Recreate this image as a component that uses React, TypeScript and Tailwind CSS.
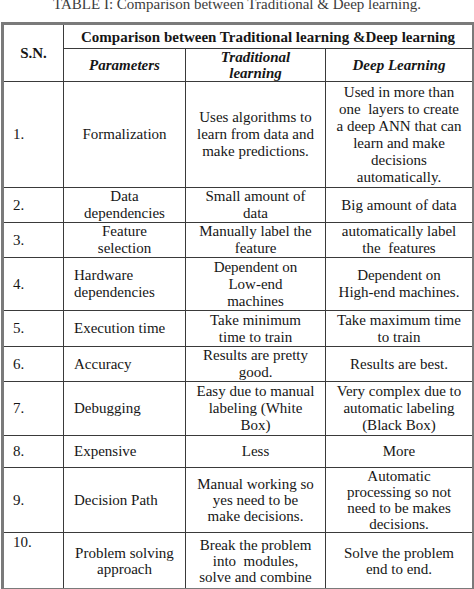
type Row = {
  sn: string;
  p: string[];
  pLeft?: boolean;
  t: string[];
  d: string[];
  h: number;
  snTop?: boolean;
  tight?: boolean;
};

const rows: Row[] = [
  {
    sn: "1.",
    p: ["Formalization"],
    t: ["Uses algorithms to", "learn from data and", "make predictions."],
    d: ["Used in more than", "one  layers to create", "a deep ANN that can", "learn and make", "decisions", "automatically."],
    h: 106,
  },
  { sn: "2.", p: ["Data", "dependencies"], t: ["Small amount of", "data"], d: ["Big amount of data"], h: 35 },
  { sn: "3.", p: ["Feature", "selection"], t: ["Manually label the", "feature"], d: ["automatically label", "the  features"], h: 34 },
  {
    sn: "4.",
    p: ["Hardware", "dependencies"],
    pLeft: true,
    t: ["Dependent on", "Low-end", "machines"],
    d: ["Dependent on", "High-end machines."],
    h: 53,
  },
  { sn: "5.", p: ["Execution time"], pLeft: true, t: ["Take minimum", "time to train"], d: ["Take maximum time", "to train"], h: 36 },
  { sn: "6.", p: ["Accuracy"], pLeft: true, t: ["Results are pretty", "good."], d: ["Results are best."], h: 34 },
  {
    sn: "7.",
    p: ["Debugging"],
    pLeft: true,
    t: ["Easy due to manual", "labeling (White", "Box)"],
    d: ["Very complex due to", "automatic labeling", "(Black Box)"],
    h: 54,
  },
  { sn: "8.", p: ["Expensive"], pLeft: true, t: ["Less"], d: ["More"], h: 32 },
  {
    sn: "9.",
    p: ["Decision Path"],
    pLeft: true,
    t: ["Manual working so", "yes need to be", "make decisions."],
    d: ["Automatic", "processing so not", "need to be makes", "decisions."],
    h: 65,
    tight: true,
  },
  {
    sn: "10.",
    p: ["Problem solving", "approach"],
    t: ["Break the problem", "into  modules,", "solve and combine"],
    d: ["Solve the problem", "end to end."],
    h: 57,
    snTop: true,
    tight: true,
  },
];

const Lines = ({ lines }: { lines: string[] }) => (
  <>
    {lines.map((l, i) => (
      <div key={i} className="whitespace-pre">
        {l}
      </div>
    ))}
  </>
);

const cell = "border border-[#3a3a3a] p-0 align-middle";

export default function App() {
  return (
    <div className="w-[474px] h-[589px] overflow-hidden bg-white text-[#161616] font-['Liberation_Serif','Times_New_Roman',serif]">
      <p className="-mt-[3px] h-[25px] text-center text-[15px] leading-[15px] text-[#3c3c3c]">
        TABLE I: Comparison between Traditional &amp; Deep learning.
      </p>
      <table className="ml-[1px] w-[471px] border-collapse border-[3px] border-[#7a7a7a] table-fixed text-[15px] leading-[17px]">
        <colgroup>
          <col className="w-[61px]" />
          <col className="w-[122px]" />
          <col className="w-[140px]" />
          <col className="w-[148px]" />
        </colgroup>
        <thead>
          <tr className="h-[25px]">
            <th rowSpan={2} className={`${cell} text-center font-bold`}>
              S.N.
            </th>
            <th colSpan={3} className={`${cell} text-center font-bold leading-[20px]`}>
              Comparison between Traditional learning &amp;Deep learning
            </th>
          </tr>
          <tr className="h-[33px]">
            <th className={`${cell} text-center font-bold italic`}>Parameters</th>
            <th className={`${cell} text-center font-bold italic leading-[16px]`}>
              Traditional
              <br />
              learning
            </th>
            <th className={`${cell} text-center font-bold italic`}>Deep Learning</th>
          </tr>
        </thead>
        <tbody>
          {rows.map((r) => (
            <tr key={r.sn} className={r.tight ? "leading-[16px]" : ""} style={{ height: r.h }}>
              <td className={`${cell} pl-[9px] ${r.snTop ? "align-top pt-[1px]" : ""}`}>{r.sn}</td>
              <td className={`${cell} ${r.pLeft ? "text-left pl-[10px]" : "text-center"}`}>
                <Lines lines={r.p} />
              </td>
              <td className={`${cell} text-center`}>
                <Lines lines={r.t} />
              </td>
              <td className={`${cell} text-center`}>
                <Lines lines={r.d} />
              </td>
            </tr>
          ))}
        </tbody>
      </table>
    </div>
  );
}
